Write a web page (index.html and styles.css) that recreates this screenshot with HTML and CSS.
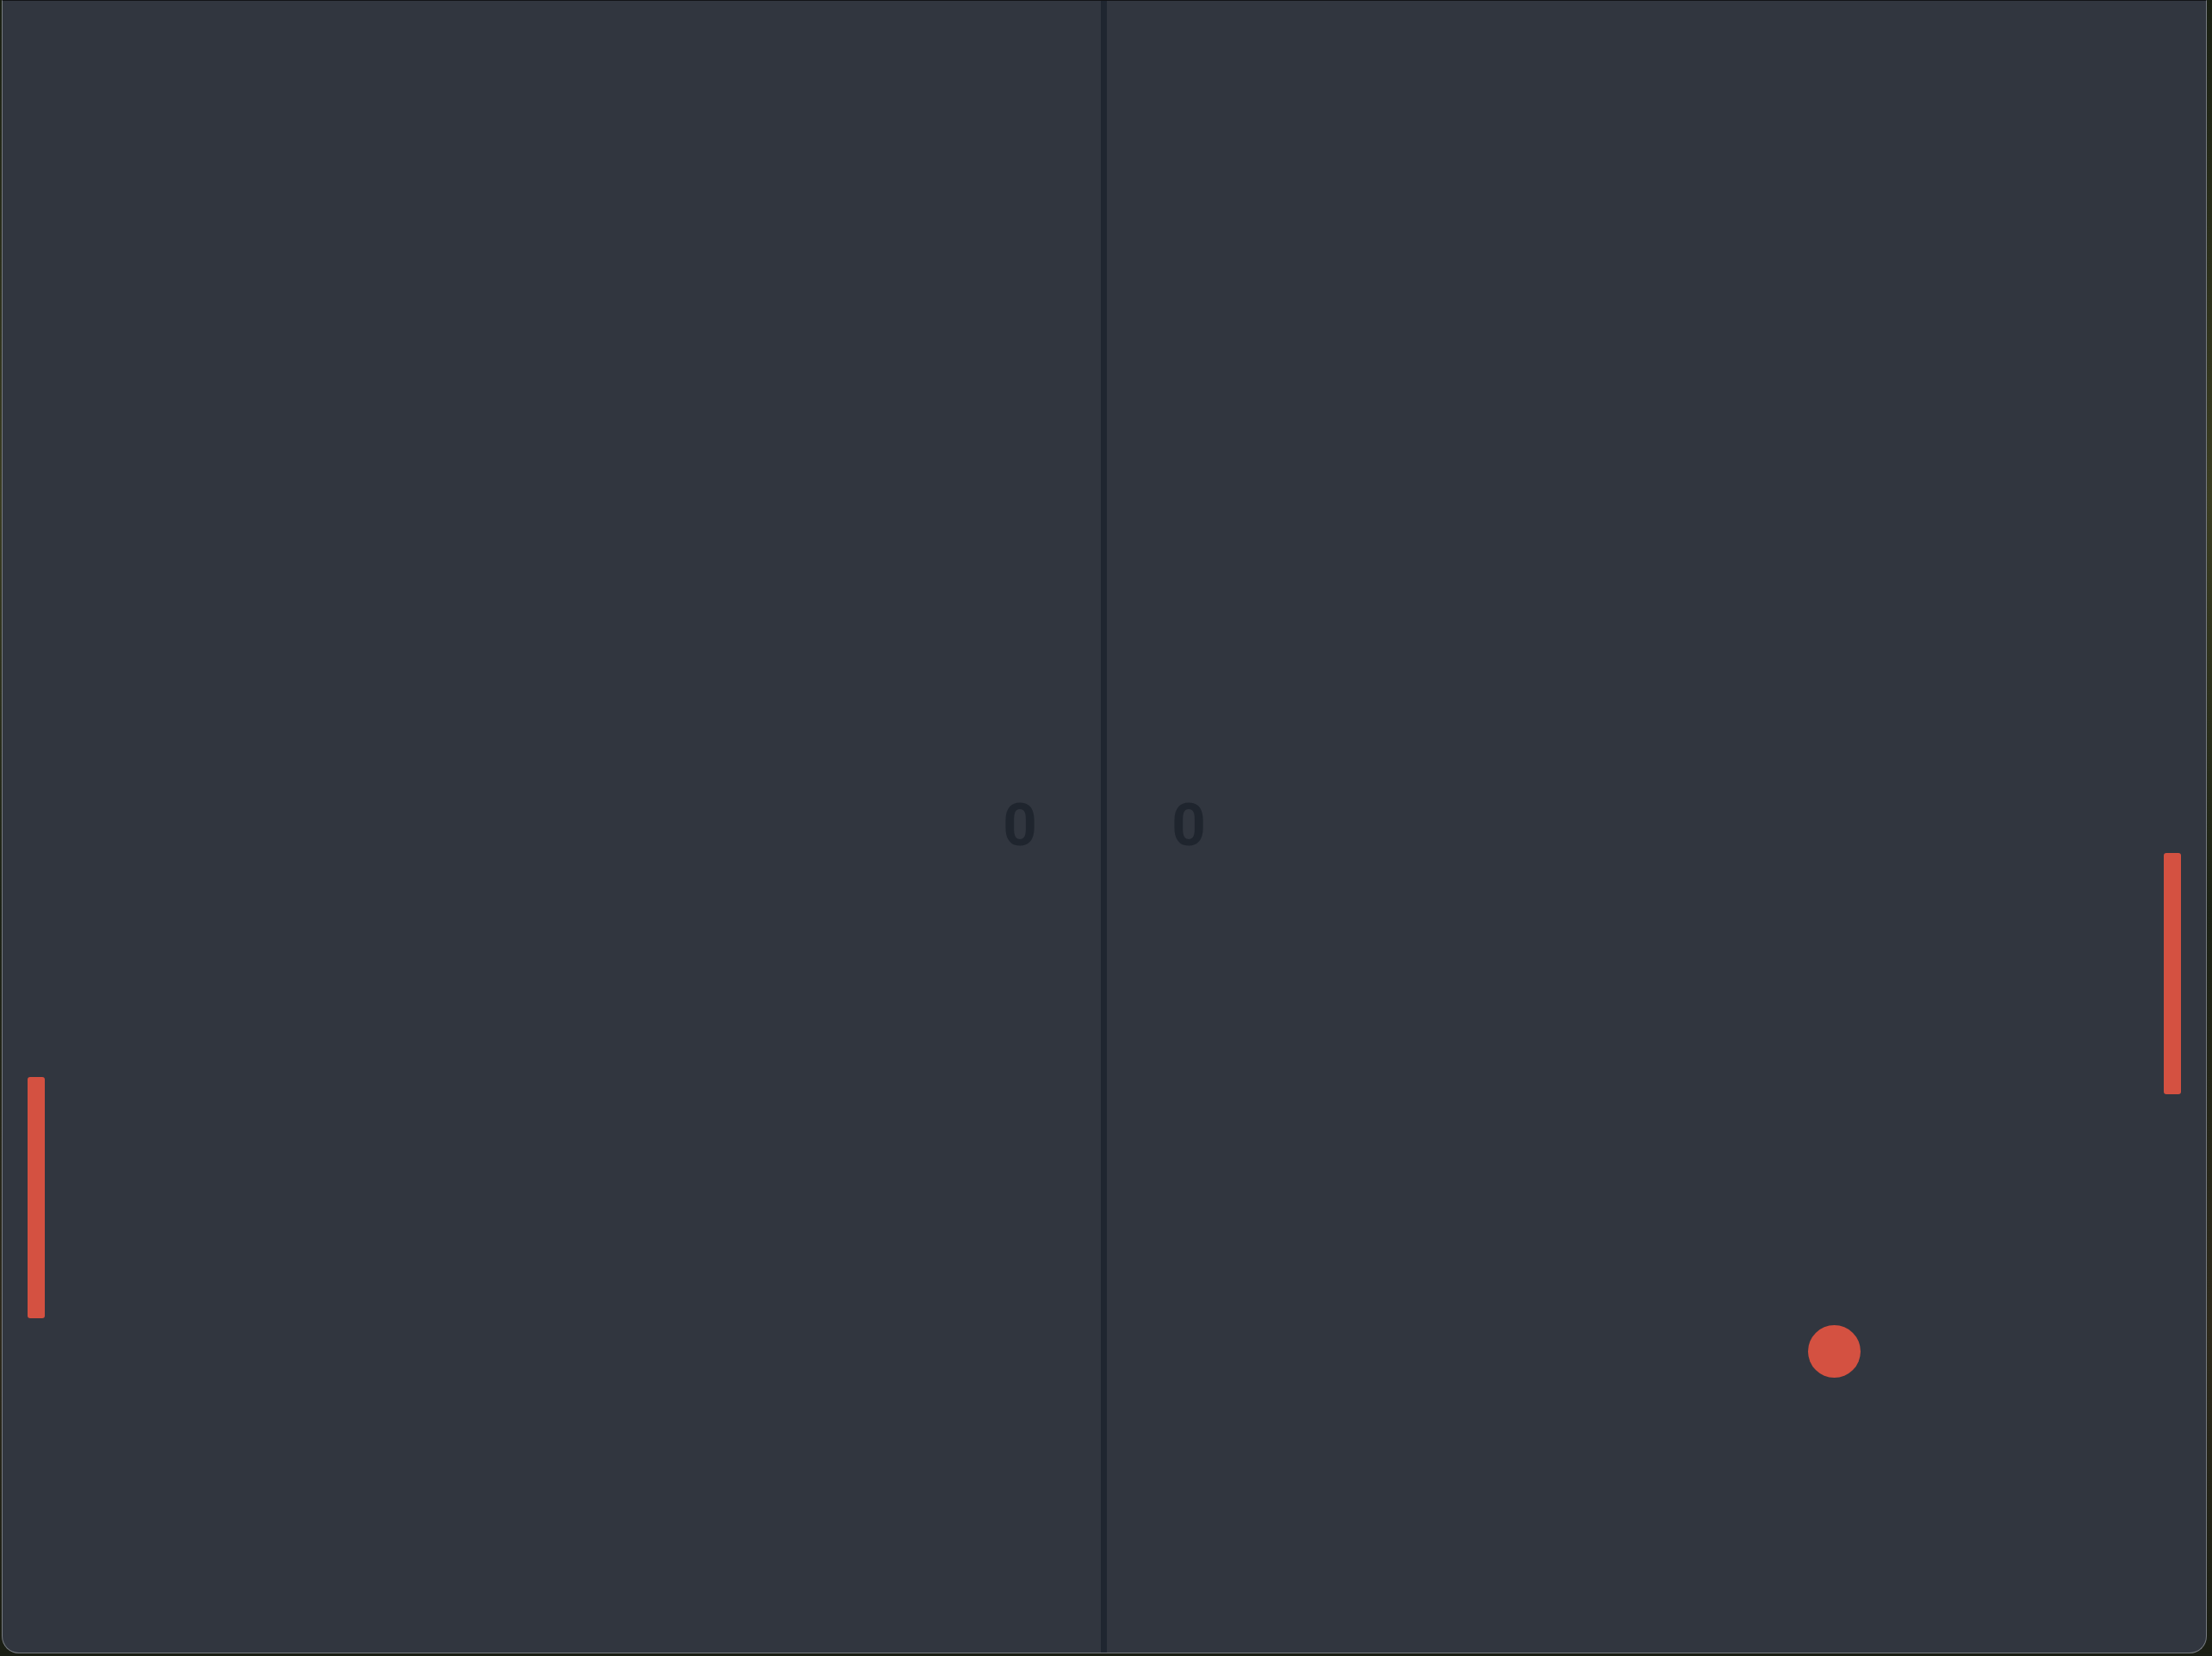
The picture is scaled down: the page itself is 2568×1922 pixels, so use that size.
FILE: index.html
```html
<!DOCTYPE html>
<html lang="en">
<head>
<meta charset="utf-8">
<title>Pong</title>
<link rel="stylesheet" href="styles.css">
</head>
<body>
<div class="desktop">
  <div class="window">
    <div class="court">
      <div class="net"></div>
      <div class="score score-left">0</div>
      <div class="score score-right">0</div>
      <div class="paddle paddle-left"></div>
      <div class="paddle paddle-right"></div>
      <div class="ball"></div>
    </div>
  </div>
</div>
</body>
</html>
```

FILE: styles.css
```css
html, body {
  margin: 0;
  padding: 0;
  width: 2568px;
  height: 1922px;
  overflow: hidden;
}

.desktop {
  width: 2568px;
  height: 1922px;
  background:
    linear-gradient(180deg, #1a2014 0%, #3b3d22 30%, #1c2216 55%, #2e2a1c 80%, #1a1e14 100%);
  padding-left: 2px;
  box-sizing: border-box;
}

.window {
  width: 2560px;
  height: 1919px;
  box-sizing: border-box;
  border: 1px solid #767a80;
  border-top: 1px solid #121417;
  border-radius: 0 0 20px 20px;
  background: #31363f;
  overflow: hidden;
}

.court {
  position: relative;
  width: 100%;
  height: 100%;
  font-family: Roboto, "Liberation Sans", sans-serif;
}

.net {
  position: absolute;
  left: 1275px;
  top: 0;
  width: 7px;
  height: 100%;
  background: #1f2630;
}

.score {
  position: absolute;
  top: 922px;
  width: 100px;
  font-size: 69px;
  line-height: 69px;
  font-weight: 700;
  color: #1f252e;
  text-align: center;
}

.score-left {
  left: 1131px;
}

.score-right {
  left: 1327px;
}

.paddle {
  position: absolute;
  width: 20px;
  height: 280px;
  border-radius: 3px;
  background: #d45141;
}

.paddle-left {
  left: 29px;
  top: 1249px;
}

.paddle-right {
  left: 2509px;
  top: 989px;
}

.ball {
  position: absolute;
  left: 2096px;
  top: 1537px;
  width: 61px;
  height: 61px;
  border-radius: 50%;
  background: #d45141;
}
```
